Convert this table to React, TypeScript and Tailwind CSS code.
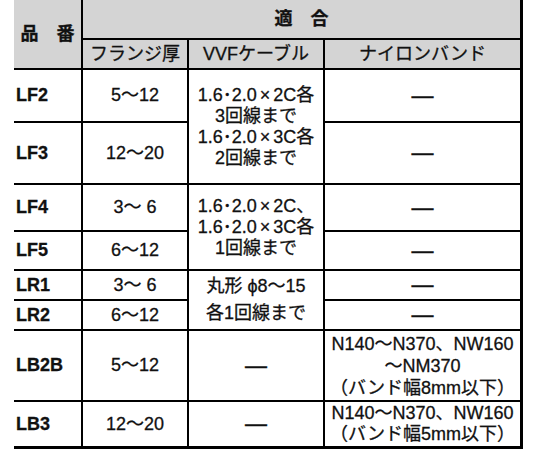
const cell =
  "flex flex-col items-center justify-center border-b-2 border-r-2 border-black text-center leading-[21px]";
const last = "border-r-[3px]";
const head = "bg-[#d4d4d4]";

function Dash() {
  return <span className="text-[22px] leading-none">—</span>;
}

// wide multiply sign, as in the printed spec sheet
function X() {
  return <span className="mx-[3px]">×</span>;
}

export default function App() {
  return (
    <div
      className="h-[450px] w-[540px] bg-white text-[18px] text-[#111] [-webkit-text-stroke:0.3px_#111]"
      style={{ fontFamily: '"Liberation Sans", "Noto Sans CJK JP", sans-serif' }}
    >
      <div className="ml-[14px] grid grid-cols-[69px_106px_136px_198px] grid-rows-[40px_30px_53px_62px_47px_39px_30px_30px_71px_47px]">
        {/* header */}
        <div className={`${cell} ${head} row-span-2 font-bold`}>品　番</div>
        <div className={`${cell} ${head} ${last} col-span-3 font-bold`}>適　合</div>
        <div className={`${cell} ${head}`}>フランジ厚</div>
        <div className={`${cell} ${head}`}>VVFケーブル</div>
        <div className={`${cell} ${head} ${last}`}>ナイロンバンド</div>

        {/* LF2 / LF3 */}
        <div className={`${cell} items-start pl-[2px] font-bold`}>LF2</div>
        <div className={cell}>5〜12</div>
        <div className={`${cell} row-span-2`}>
          <span>1.6･2.0<X />2C各</span>
          <span>3回線まで</span>
          <span>1.6･2.0<X />3C各</span>
          <span>2回線まで</span>
        </div>
        <div className={`${cell} ${last}`}><Dash /></div>
        <div className={`${cell} items-start pl-[2px] font-bold`}>LF3</div>
        <div className={cell}>12〜20</div>
        <div className={`${cell} ${last}`}><Dash /></div>

        {/* LF4 / LF5 */}
        <div className={`${cell} items-start pl-[2px] font-bold`}>LF4</div>
        <div className={cell}>3〜 6</div>
        <div className={`${cell} row-span-2`}>
          <span>1.6･2.0<X />2C、</span>
          <span>1.6･2.0<X />3C各</span>
          <span>1回線まで</span>
        </div>
        <div className={`${cell} ${last}`}><Dash /></div>
        <div className={`${cell} items-start pl-[2px] font-bold`}>LF5</div>
        <div className={cell}>6〜12</div>
        <div className={`${cell} ${last}`}><Dash /></div>

        {/* LR1 / LR2 */}
        <div className={`${cell} items-start pl-[2px] font-bold`}>LR1</div>
        <div className={cell}>3〜 6</div>
        <div className={`${cell} row-span-2 leading-[27px]`}>
          <span>丸形 ϕ8〜15</span>
          <span>各1回線まで</span>
        </div>
        <div className={`${cell} ${last}`}><Dash /></div>
        <div className={`${cell} items-start pl-[2px] font-bold`}>LR2</div>
        <div className={cell}>6〜12</div>
        <div className={`${cell} ${last}`}><Dash /></div>

        {/* LB2B */}
        <div className={`${cell} items-start pl-[2px] font-bold`}>LB2B</div>
        <div className={cell}>5〜12</div>
        <div className={cell}><Dash /></div>
        <div className={`${cell} ${last} leading-[22px]`}>
          <span>N140〜N370、NW160</span>
          <span>〜NM370</span>
          <span>（バンド幅8mm以下）</span>
        </div>

        {/* LB3 */}
        <div className={`${cell} border-b-[3px] items-start pl-[2px] font-bold`}>LB3</div>
        <div className={`${cell} border-b-[3px]`}>12〜20</div>
        <div className={`${cell} border-b-[3px]`}><Dash /></div>
        <div className={`${cell} ${last} border-b-[3px]`}>
          <span>N140〜N370、NW160</span>
          <span>（バンド幅5mm以下）</span>
        </div>
      </div>
    </div>
  );
}
